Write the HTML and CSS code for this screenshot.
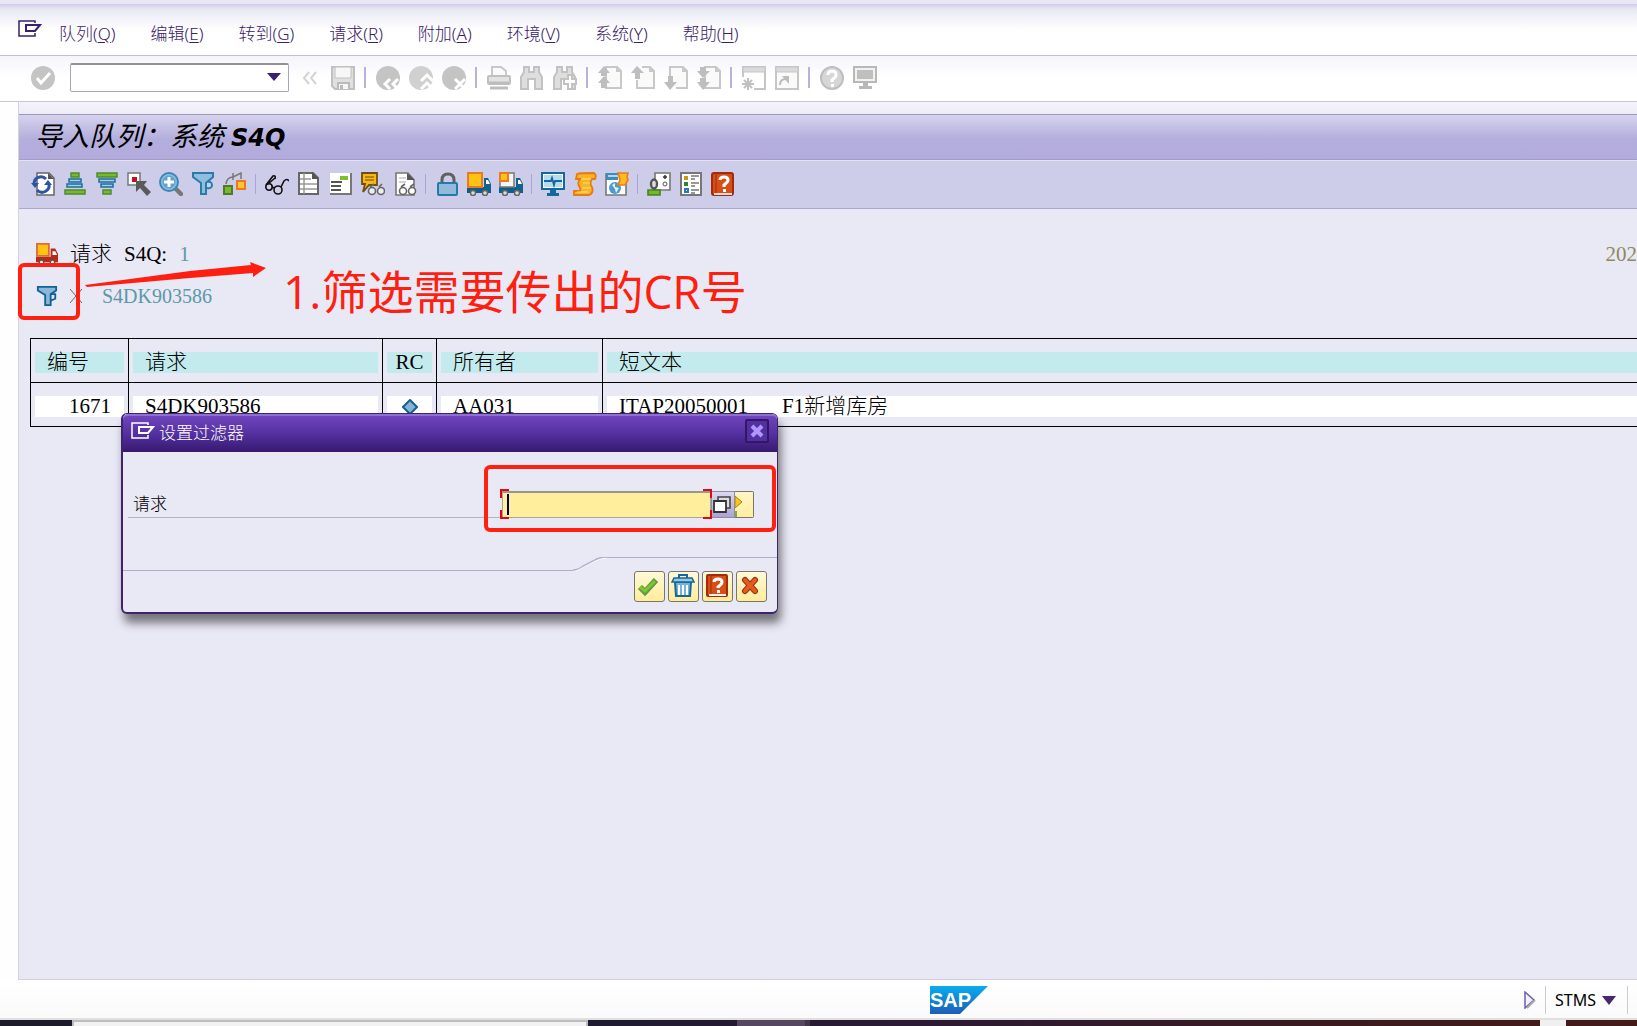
FILE: index.html
```
<!DOCTYPE html>
<html lang="zh-CN">
<head>
    <meta charset="UTF-8">
    <meta name="viewport" content="width=device-width, initial-scale=1.0">
    <title>导入队列：系统 S4Q</title>
    <link rel="stylesheet" href="styles.css">
</head>
<body>
    <!-- Menu bar -->
    <nav class="menubar">
        <button class="menu-icon" aria-label="窗口菜单"><svg width="24" height="18" viewBox="0 0 24 18"><path d="M17 3V1H1v15h16v-3" fill="none" stroke="#38206a" stroke-width="1.5"/><path d="M8 5h14l-5 6H8z" fill="none" stroke="#38206a" stroke-width="2"/></svg></button>
        <div class="menus">
            <button>队列(<u>Q</u>)</button>
            <button>编辑(<u>E</u>)</button>
            <button>转到(<u>G</u>)</button>
            <button>请求(<u>R</u>)</button>
            <button>附加(<u>A</u>)</button>
            <button>环境(<u>V</u>)</button>
            <button>系统(<u>Y</u>)</button>
            <button>帮助(<u>H</u>)</button>
        </div>
    </nav>

    <!-- Standard toolbar -->
    <div class="toolbar">
        <button class="enter" aria-label="回车"><svg viewBox="0 0 24 24"><circle cx="12" cy="12" r="12" fill="#c4c4c4"/><path d="M6 12l4 5 9-10" fill="none" stroke="#fff" stroke-width="3"/></svg></button>
        <div class="command">
            <select aria-label="命令"><option></option></select>
            <svg class="caret" width="14" height="8" viewBox="0 0 14 8"><path d="M0 0h14L7 8z" fill="#3c2070"/></svg>
        </div>
        <button aria-label="收起"><svg viewBox="0 0 24 24"><path d="M11 6l-5 6 5 6M18 6l-5 6 5 6" fill="none" stroke="#d4d4d4" stroke-width="2"/></svg></button>
        <button aria-label="保存"><svg viewBox="0 0 24 24"><path d="M1 1h22v22H4l-3-3z" fill="#e0e0e0" stroke="#c0c0c0" stroke-width="2"/><path d="M4 1h16v11H4z" fill="#f7f7f7" stroke="#c0c0c0"/><path d="M7 23v-6h11v6" fill="#f7f7f7" stroke="#bbb" stroke-width="2"/><path d="M9 19h3v4H9z" fill="#bbb"/></svg></button>
        <span class="sep"></span>
        <button aria-label="返回"><svg viewBox="0 0 24 24"><circle cx="12" cy="12" r="12" fill="#c4c4c4"/><path d="M14 13l-5 5 5 5M22 13l-5 5 5 5" fill="none" stroke="#fff" stroke-width="3"/></svg></button>
        <button aria-label="退出"><svg viewBox="0 0 24 24"><circle cx="12" cy="12" r="12" fill="#d0d0d0"/><path d="M12 15l6-6 6 6M12 23l6-6 6 6" fill="none" stroke="#fff" stroke-width="3"/></svg></button>
        <button aria-label="取消"><svg viewBox="0 0 24 24"><circle cx="12" cy="12" r="12" fill="#c4c4c4"/><path d="M13 13l10 10M23 13L13 23" stroke="#fff" stroke-width="3"/></svg></button>
        <span class="sep"></span>
        <button aria-label="打印"><svg viewBox="0 0 24 24"><path d="M5 10V1h9l5 4v5" fill="#fafafa" stroke="#c8c8c8" stroke-width="2"/><rect x="1" y="10" width="22" height="8" rx="1" fill="#e2e2e2" stroke="#c0c0c0" stroke-width="2"/><path d="M2 17h20M3 22h18" stroke="#bdbdbd" stroke-width="3"/></svg></button>
        <button aria-label="查找"><svg viewBox="0 0 24 24"><path d="M4 1h5v5h5V1h5v5l3 5v12h-7V13h-7v10H1V11l3-5z" fill="#dedede" stroke="#c2c2c2" stroke-width="2"/></svg></button>
        <button aria-label="查找下一个"><svg viewBox="0 0 24 24"><path d="M4 1h5v5h5V1h5v5l3 5v12h-7V13h-7v10H1V11l3-5z" fill="#dedede" stroke="#c2c2c2" stroke-width="2"/><path d="M15 9h4v4h4v5h-4v5h-4v-5h-4v-5h4z" fill="#fff" stroke="#c2c2c2" stroke-width="2"/></svg></button>
        <span class="sep"></span>
        <button aria-label="首页"><svg viewBox="0 0 24 24"><path d="M8 1h11l4 4v17H8z" fill="#fafafa" stroke="#c8c8c8" stroke-width="2"/><path d="M18 1v5h5z" fill="#c8c8c8"/><path d="M6 0l6 7H9v3h-6V7H0zM6 10l6 7H9v5H3v-5H0z" fill="#bebebe"/></svg></button>
        <button aria-label="上一页"><svg viewBox="0 0 24 24"><path d="M6 14v8h17V5l-4-4h-8" fill="#fafafa" stroke="#c8c8c8" stroke-width="2"/><path d="M18 1v5h5z" fill="#c8c8c8"/><path d="M6 0l7 7H9v6H4V7H0z" fill="#bebebe"/></svg></button>
        <button aria-label="下一页"><svg viewBox="0 0 24 24"><path d="M6 10V1h13l4 4v17H12" fill="#fafafa" stroke="#c8c8c8" stroke-width="2"/><path d="M18 1v5h5z" fill="#c8c8c8"/><path d="M4 10h5v6h4l-7 8-6-8h4z" fill="#bebebe"/></svg></button>
        <button aria-label="末页"><svg viewBox="0 0 24 24"><path d="M8 1h11l4 4v17H8z" fill="#fafafa" stroke="#c8c8c8" stroke-width="2"/><path d="M18 1v5h5z" fill="#c8c8c8"/><path d="M3 1h6v4h4l-7 7-6-7h3zM3 12h6v4h4l-7 8-6-8h3z" fill="#bebebe"/></svg></button>
        <span class="sep"></span>
        <button aria-label="新建会话"><svg viewBox="0 0 24 24"><path d="M1 11V1h22v22H12" fill="none" stroke="#c6c6c6" stroke-width="2"/><path d="M1 1h22v5H1z" fill="#dadada" stroke="#c6c6c6"/><path d="M6 12v12M0 18h12M2 14l8 8M10 14l-8 8" stroke="#c0c0c0" stroke-width="2"/></svg></button>
        <button aria-label="快捷方式"><svg viewBox="0 0 24 24"><path d="M1 1h22v22H1z" fill="#fafafa" stroke="#c6c6c6" stroke-width="2"/><path d="M1 1h22v5H1z" fill="#dadada" stroke="#c6c6c6"/><path d="M5 19q0-6 6-6" fill="none" stroke="#bcbcbc" stroke-width="2"/><path d="M7 10h7v8z" fill="#bcbcbc"/></svg></button>
        <span class="sep"></span>
        <button aria-label="帮助"><svg viewBox="0 0 24 24"><circle cx="12" cy="12" r="11" fill="#d6d6d6" stroke="#bebebe" stroke-width="2"/><path d="M8 9q0-4 4-4t4 4q0 2-4 5v2" fill="none" stroke="#fff" stroke-width="3"/><path d="M11 18h3v3h-3z" fill="#fff"/></svg></button>
        <button aria-label="本地布局"><svg viewBox="0 0 24 24"><path d="M1 1h22v15H1z" fill="#f2f2f2" stroke="#b8b8b8" stroke-width="2"/><path d="M4 4h16v9H4z" fill="#bfbfbf"/><path d="M10 16h5v4h4v3H6v-3h4z" fill="#b8b8b8"/></svg></button>
    </div>

    <main class="window">
        <h1 class="title">导入队列：系统 <span class="sid">S4Q</span></h1>

        <!-- Application toolbar -->
        <div class="app-toolbar">
            <button aria-label="刷新"><svg viewBox="0 0 24 24"><path d="M6 1h12l5 5v17H6z" fill="#fff" stroke="#666" stroke-width="1.5"/><path d="M17 1v6h6z" fill="#555"/><path d="M3 12a7 7 0 0 1 12-5M18 12a7 7 0 0 1-12 6" fill="none" stroke="#2c55a5" stroke-width="3"/><path d="M0 11h8l-4 5zM13 13h8l-4-5z" fill="#2c55a5"/></svg></button>
            <button aria-label="升序"><svg viewBox="0 0 24 24"><path d="M8 1h8v4H8zM2 18h20v4H2z" fill="#7cb82a" stroke="#4c8c2c" stroke-width="1.5"/><rect x="6" y="7" width="12" height="3" fill="#a9cde8" stroke="#1b6c9c" stroke-width="1.5"/><rect x="4" y="12" width="15" height="3" fill="#a9cde8" stroke="#1b6c9c" stroke-width="1.5"/></svg></button>
            <button aria-label="降序"><svg viewBox="0 0 24 24"><path d="M2 1h20v4H2zM8 18h8v4H8z" fill="#7cb82a" stroke="#4c8c2c" stroke-width="1.5"/><rect x="4" y="7" width="16" height="3" fill="#a9cde8" stroke="#1b6c9c" stroke-width="1.5"/><rect x="6" y="12" width="12" height="3" fill="#a9cde8" stroke="#1b6c9c" stroke-width="1.5"/></svg></button>
            <button aria-label="选择"><svg viewBox="0 0 24 24"><path d="M1 1h12v12H1z" fill="#fff" stroke="#777" stroke-width="1.5"/><path d="M5 5h5v5H5z" fill="#c8101c"/><path d="M9 9h11l-3 4 7 7-4 4-7-8-4 4z" fill="#5a5a5a"/></svg></button>
            <button aria-label="放大"><svg viewBox="0 0 24 24"><path d="M17 17l5 5" stroke="#777" stroke-width="4.5" stroke-linecap="round"/><circle cx="10" cy="10" r="9" fill="#8fbcdd" stroke="#3c87b4" stroke-width="2"/><circle cx="10" cy="10" r="6.5" fill="#5fa3cb"/><path d="M10 5v10M5 10h10" stroke="#fff" stroke-width="3"/></svg></button>
            <button aria-label="过滤"><svg viewBox="0 0 24 24"><path d="M2 1h20v4l-7 6v11h-5V11L2 5z" fill="#92bedd" stroke="#2a7bab" stroke-width="2"/><path d="M16 10q5-1 5 3t-5 3" fill="#b9d8ed" stroke="#2a7bab" stroke-width="2"/></svg></button>
            <button aria-label="依赖关系"><svg viewBox="0 0 24 24"><path d="M3 12q1-7 7-7M10 1v7M10 5l8-4v6" fill="none" stroke="#777" stroke-width="1.5"/><rect x="1" y="14" width="8" height="8" fill="#7cb82a" stroke="#4c7c2c" stroke-width="2"/><rect x="14" y="9" width="8" height="8" fill="#ffc52a" stroke="#e97929" stroke-width="2"/></svg></button>
            <span class="sep"></span>
            <button aria-label="显示"><svg viewBox="0 0 24 24"><g fill="none" stroke="#111" stroke-width="1.6"><circle cx="4" cy="15" r="3.2"/><circle cx="13" cy="18" r="4"/><path d="M1 13L8 4q3-1 2 3M7 15l3 1M16 15l3-6q3-3 5 0M3 12l7-6"/></g></svg></button>
            <button aria-label="列表"><svg viewBox="0 0 24 24"><path d="M2 1h14l5 5v16H2z" fill="#fff" stroke="#666" stroke-width="2"/><path d="M15 0v7h7z" fill="#555"/><path d="M7 1v21M3 7h11M3 12h17M3 17h17" stroke="#999" stroke-width="1.5"/></svg></button>
            <button aria-label="详细信息"><svg viewBox="0 0 24 24"><path d="M1 1h21v21H1z" fill="#fff"/><path d="M22 1v21H1" fill="none" stroke="#777" stroke-width="2"/><path d="M11 4h8v4h-8z" fill="#7cc02c"/><path d="M2 10h11M2 14h10M2 18h10" stroke="#555" stroke-width="2"/></svg></button>
            <button aria-label="显示日志"><svg viewBox="0 0 24 24"><path d="M1 1h15v12h-8l-6 7 2-8H1z" fill="#f9b717" stroke="#6d5010" stroke-width="1.8"/><path d="M4 5h9M4 8h9" stroke="#6d5010"/><circle cx="11" cy="19" r="3.5" fill="#eee" stroke="#666" stroke-width="1.6"/><circle cx="20" cy="19" r="3.5" fill="#eee" stroke="#666" stroke-width="1.6"/><path d="M9 15l4-3M18 15l3-3" stroke="#666" stroke-width="1.6"/></svg></button>
            <button aria-label="显示文档"><svg viewBox="0 0 24 24"><path d="M3 23V1h12l6 7v15z" fill="#fff" stroke="#777" stroke-width="1.6"/><path d="M14 1v7h8z" fill="#555"/><path d="M6 6h7M6 10h7" stroke="#aaa"/><circle cx="10" cy="19" r="3.5" fill="#fff" stroke="#666" stroke-width="1.6"/><circle cx="19" cy="19" r="3.5" fill="#fff" stroke="#666" stroke-width="1.6"/><path d="M8 15l4-3M17 15l4-3" stroke="#666" stroke-width="1.6"/></svg></button>
            <span class="sep"></span>
            <button aria-label="锁定"><svg viewBox="0 0 24 24"><path d="M7 11V8q0-6 6-6t6 6v3" fill="none" stroke="#606060" stroke-width="3"/><rect x="3" y="11" width="19" height="12" rx="1" fill="#94badb" stroke="#247aaa" stroke-width="2"/></svg></button>
            <button aria-label="导入全部"><svg viewBox="0 0 24 24"><path d="M0 15h24v6H0z" fill="#0d5e8c"/><path d="M1 1h14v14H1z" fill="#ffc413" stroke="#eb7a20" stroke-width="2"/><path d="M17 6h4l3 6v7h-7z" fill="#12618f"/><path d="M19 8h2l2 4h-4z" fill="#fff"/><circle cx="6" cy="21" r="2.5" fill="#ddd" stroke="#666" stroke-width="1.5"/><circle cx="18" cy="21" r="2.5" fill="#ddd" stroke="#666" stroke-width="1.5"/></svg></button>
            <button aria-label="导入请求"><svg viewBox="0 0 24 24"><path d="M0 15h24v6H0z" fill="#0d5e8c"/><path d="M1 1h14v14H1z" fill="#f5f5f5" stroke="#777" stroke-width="1.5"/><path d="M1 1h8v8H1z" fill="#ffc413" stroke="#eb7a20" stroke-width="2"/><path d="M17 6h4l3 6v7h-7z" fill="#12618f"/><path d="M19 8h2l2 4h-4z" fill="#fff"/><circle cx="6" cy="21" r="2.5" fill="#ddd" stroke="#666" stroke-width="1.5"/><circle cx="18" cy="21" r="2.5" fill="#ddd" stroke="#666" stroke-width="1.5"/></svg></button>
            <span class="sep"></span>
            <button aria-label="监控"><svg viewBox="0 0 24 24"><path d="M1 1h22v16H1z" fill="#fff" stroke="#12699b" stroke-width="2"/><path d="M3 3h18v12H3z" fill="#b7dcf0"/><path d="M3 9h7l1-3 2 7 1-4h7" fill="none" stroke="#12699b" stroke-width="1.8"/><path d="M9 17h6v4h3v3H6v-3h3z" fill="#12699b"/></svg></button>
            <button aria-label="日志"><svg viewBox="0 0 24 24"><path d="M4 2q2-1 17-1 3 2 1 6h-3q-3 4 0 8 2 6-3 8H1v-4h6q1-2-1-5-2-4 1-7H3z" fill="#f9b522" stroke="#e77917" stroke-width="1.8"/><path d="M8 7h10M10 11h7M9 16h9M4 20h11" stroke="#fde28a"/></svg></button>
            <button aria-label="历史"><svg viewBox="0 0 24 24"><path d="M1 2h20v21H1z" fill="#fff" stroke="#777" stroke-width="1.6"/><path d="M1 1h12v7H1z" fill="#3f8bbb"/><path d="M3 4h10" stroke="#b5d7eb" stroke-width="2"/><circle cx="10" cy="16" r="6" fill="#4b9acb"/><path d="M7 13l3-2v4l4 1-3 5-1-4z" fill="#e5f3fb"/><path d="M13 1h10l-1 4 1 3-3 5h-7l2-5z" fill="#ffbd1d" stroke="#ec7b1b" stroke-width="1.6"/></svg></button>
            <span class="sep"></span>
            <button aria-label="用户"><svg viewBox="0 0 24 24"><path d="M8 1h15v17H8z" fill="#fff" stroke="#777" stroke-width="1.6"/><path d="M16 5h4M18 3v4" stroke="#333" stroke-width="1.5"/><circle cx="18" cy="12" r="2" fill="none" stroke="#555"/><path d="M1 23v-5h12v5z" fill="#77b82a" stroke="#42851f" stroke-width="1.6"/><ellipse cx="7" cy="12" rx="3" ry="4.5" fill="#ddd" stroke="#555" stroke-width="2.4"/></svg></button>
            <button aria-label="图例"><svg viewBox="0 0 24 24"><path d="M2 1h20v22H2z" fill="#fff" stroke="#777" stroke-width="2"/><path d="M5 4h4v4H5z" fill="#c69816"/><path d="M5 10h4v4H5z" fill="#318231"/><path d="M6 17h3v3H6z" fill="none" stroke="#247eb0" stroke-width="2"/><path d="M12 4h8M12 7h4M12 11h8M12 14h4M12 18h8M12 21h4" stroke="#777" stroke-width="1.4"/></svg></button>
            <button aria-label="应用帮助"><svg viewBox="0 0 24 24"><rect x="1" y="1" width="21" height="22" rx="2" fill="#d64f16" stroke="#a52a0b" stroke-width="2"/><path d="M5 1v20" stroke="#a52a0b"/><path d="M3 22h18" stroke="#ddd" stroke-width="2"/><path d="M9 8q0-3 4-3t4 3q0 2-4 5v2" fill="none" stroke="#fff" stroke-width="3"/><path d="M12 17h3v3h-3z" fill="#fff"/></svg></button>
        </div>

        <section class="list">
            <div class="info">
                <svg width="22" height="22" viewBox="0 0 24 24"><path d="M0 15h24v6H0z" fill="#b62b18"/><path d="M1 1h13v13H1z" fill="#ffc413" stroke="#e06a3b" stroke-width="2"/><path d="M16 6h5l3 6v7h-8z" fill="#b62b18"/><path d="M18 9h3l2 4h-5z" fill="#fff"/><circle cx="6" cy="21" r="2.5" fill="#eee" stroke="#555" stroke-width="1.5"/><circle cx="18" cy="21" r="2.5" fill="#eee" stroke="#555" stroke-width="1.5"/></svg>
                <span>请求</span>
                <span>S4Q:</span>
                <span class="teal">1</span>
                <span class="date">202</span>
            </div>
            <div class="info">
                <svg width="22" height="22" viewBox="0 0 24 24"><path d="M2 2h20v4l-6 4v12h-6V11L2 6z" fill="#8db5d9" stroke="#0f6294" stroke-width="2"/><path d="M16 10h5v5l-5 2" fill="none" stroke="#0f6294" stroke-width="2"/></svg>
                <svg width="16" height="16" viewBox="0 0 16 16"><path d="M0 1l12 14M12 1L0 15" stroke="#666"/></svg>
                <span class="teal filter">S4DK903586</span>
            </div>

            <table class="queue">
                <thead>
                    <tr>
                        <th class="no"><span>编号</span></th>
                        <th class="req"><span>请求</span></th>
                        <th class="rc"><span>RC</span></th>
                        <th class="owner"><span>所有者</span></th>
                        <th><span>短文本</span></th>
                    </tr>
                </thead>
                <tbody>
                    <tr>
                        <td class="no"><span>1671</span></td>
                        <td><span>S4DK903586</span></td>
                        <td class="rc"><span><svg width="16" height="16" viewBox="0 0 16 16"><path d="M8 1l3 3 4 4-4 4-3 3-3-3-4-4 4-4z" fill="#85b3d8" stroke="#155f8d" stroke-width="2"/></svg></span></td>
                        <td><span>AA031</span></td>
                        <td><span>ITAP20050001<b class="desc">F1新增库房</b></span></td>
                    </tr>
                </tbody>
            </table>
        </section>
    </main>

    <footer class="status">
        <svg class="sap" width="58" height="28" viewBox="0 0 58 28">
            <defs><linearGradient id="sapBlue" x1="0" y1="0" x2="0" y2="1"><stop offset="0" stop-color="#08adee"/><stop offset="1" stop-color="#1d5cb9"/></linearGradient></defs>
            <path d="M0 0h58L30 28H0z" fill="url(#sapBlue)"/>
            <text class="sap-text" x="0" y="21">SAP</text>
        </svg>
        <div class="session">
            <svg width="12" height="18" viewBox="0 0 12 18"><path d="M1 1l9 8-9 8z" fill="#f3f1fc" stroke="#6c5cb4" stroke-width="1.5"/><path d="M3 17l8-8" stroke="#aaa" stroke-width="2"/></svg>
            <label class="system">
                <select aria-label="系统信息"><option>STMS</option></select>
                <svg width="14" height="9" viewBox="0 0 14 9"><path d="M0 0h14L7 9z" fill="#45286f"/></svg>
            </label>
        </div>
    </footer>
    <div class="taskbar">
        <span class="search"></span>
        <span class="task"></span>
        <span class="tray"></span>
    </div>

    <!-- Filter dialog -->
    <div class="dialog" role="dialog" aria-labelledby="dialogTitle">
        <div class="dialog-title">
            <svg width="24" height="18" viewBox="0 0 24 18"><path d="M17 3V1H1v15h16v-3" fill="none" stroke="#fff" stroke-width="1.5"/><path d="M8 5h14l-5 6H8z" fill="none" stroke="#fff" stroke-width="2"/></svg>
            <span id="dialogTitle">设置过滤器</span>
            <button class="close" aria-label="关闭"><svg width="14" height="14" viewBox="0 0 14 14"><path d="M2 2l10 10M12 2L2 12" stroke="#b296ff" stroke-width="4"/></svg></button>
        </div>
        <div class="field-row">
            <label for="request">请求</label>
            <div class="field">
                <input type="text" id="request">
                <svg class="focus" viewBox="0 0 212 30" width="212" height="30"><path d="M1 9V1h8M203 1h8v8M1 21v8h8M203 29h8v-8" fill="none" stroke="#e30613" stroke-width="2"/></svg>
            </div>
            <button class="f4" aria-label="值帮助"><svg width="18" height="18" viewBox="0 0 18 18"><path d="M5 1h12v11H5z" fill="#ddd" stroke="#444" stroke-width="1.6"/><path d="M1 5h12v11H1z" fill="#fff" stroke="#333" stroke-width="1.8"/></svg></button>
            <button class="multi" aria-label="多项选择"><svg width="8" height="24" viewBox="0 0 8 24"><path d="M0 3l7 6-7 6z" fill="#ffc514" stroke="#a8811c"/><path d="M1 18v6" stroke="#7bae3a" stroke-width="2"/></svg></button>
        </div>
        <div class="divider">
            <span class="low"></span>
            <svg width="34" height="14" viewBox="0 0 34 14"><path d="M0 14q5 0 10-4l10-5q6-4 14-4" fill="none" stroke="#fff"/><path d="M0 13q5 0 10-4l10-5q6-4 14-4" fill="none" stroke="#b1aecb" stroke-width="1.4"/></svg>
            <span class="high"></span>
        </div>
        <div class="actions">
            <button aria-label="确认"><svg viewBox="0 0 24 24"><path d="M3 13l5 5L19 6" fill="none" stroke="#5d9a48" stroke-width="6"/><path d="M3 13l5 4L18 7" fill="none" stroke="#7fc62e" stroke-width="3"/></svg></button>
            <button aria-label="删除"><svg viewBox="0 0 24 24"><path d="M8 4V1h8v3" fill="none" stroke="#14689a" stroke-width="2"/><path d="M4 8h16l-1 14H5z" fill="#79b1d8" stroke="#14689a" stroke-width="2"/><path d="M8 11v10M12 11v10M16 11v10" stroke="#fff" stroke-width="2"/><path d="M1 8l2-4h18l2 4z" fill="#9ac6e3" stroke="#14689a" stroke-width="1.6"/></svg></button>
            <button aria-label="帮助"><svg viewBox="0 0 24 24"><rect x="2" y="1" width="20" height="21" rx="1" fill="#d64f16" stroke="#a52a0b" stroke-width="2"/><path d="M6 1v20" stroke="#a52a0b"/><path d="M4 21h17" stroke="#eee" stroke-width="2"/><path d="M9 8q0-3 4-3t4 3q0 2-4 5v1" fill="none" stroke="#fff" stroke-width="3"/><path d="M12 16h3v3h-3z" fill="#fff"/></svg></button>
            <button aria-label="取消"><svg viewBox="0 0 24 24"><path d="M6 6l10 11M16 6L6 17" stroke="#9c2e12" stroke-width="6" stroke-linecap="round"/><path d="M6 6l10 11M16 6L6 17" stroke="#e25c1c" stroke-width="4" stroke-linecap="round"/></svg></button>
        </div>
    </div>

    <!-- Notes drawn over the screen -->
    <span class="mark mark-filter"></span>
    <span class="mark mark-field"></span>
    <svg class="arrow" width="182" height="26" viewBox="0 0 182 26"><path d="M0 23L105 9l61-6-1-3 16 6-13 9v-4l-63 5L2 25z" fill="#ff1f10"/></svg>
    <p class="note">1.筛选需要传出的CR号</p>
</body>
</html>
```
FILE: styles.css
```
/* Basic styling */
* {
    box-sizing: border-box;
}

body {
    position: relative;
    display: flex;
    flex-direction: column;
    height: 100vh;
    margin: 0;
    overflow: hidden;
    background: #fefefe;
    color: #000;
    font-family: "Noto Sans", "Noto Sans CJK SC", sans-serif;
    font-size: 17px;
}

button {
    padding: 0;
    border: none;
    background: none;
    color: inherit;
    font: inherit;
    cursor: pointer;
}

svg {
    display: block;
    flex: none;
}

select {
    appearance: none;
    border: none;
    background: none;
    font: inherit;
}

/* Menu bar */
.menubar {
    display: flex;
    align-items: center;
    height: 56px;
    padding: 6px 18px 0;
    border-top: 4px solid #e9e6f5;
    border-bottom: 1px solid #c2bfcd;
    background: linear-gradient(#d0cce8, #e8e8f4 5px, #fff 26px);
    color: #38206a;
}

.menu-icon {
    margin-bottom: 8px;
}

.menus {
    display: flex;
    gap: 35px;
    margin-left: 17px;
    font-weight: 300;
}

.menus u {
    text-underline-offset: 2px;
}

/* Toolbars */
.toolbar {
    display: flex;
    align-items: center;
    gap: 9px;
    height: 46px;
    padding: 0 31px 2px;
    border-bottom: 1px solid #c9c7d4;
    background: linear-gradient(#f5f4fb, #fff 22px);
}

.toolbar svg,
.app-toolbar svg {
    width: 24px;
    height: 24px;
}

.toolbar .sep {
    width: 3px;
    height: 21px;
    border-left: 2px solid #b8b0df;
}

.enter {
    margin-right: 6px;
}

.command {
    position: relative;
}

.command select {
    display: block;
    width: 219px;
    height: 29px;
    border: 1px solid #a9a7b3;
    border-top: 2px solid #929099;
    border-radius: 2px;
    background: #fff;
}

.toolbar .caret {
    position: absolute;
    top: 10px;
    right: 8px;
    width: 14px;
    height: 8px;
}

/* Main window */
.window {
    flex: 1;
    min-height: 0;
    margin-left: 18px;
    padding-top: 12px;
    overflow: hidden;
    border-left: 1px solid #d5d1e3;
    border-bottom: 1px solid #d0cde0;
    background: linear-gradient(#f5f3fb, #eeebf7 12px, #e9e8f5 12px);
}

.title {
    height: 46px;
    margin: 0;
    padding-left: 16px;
    border-top: 1px solid #9c98bd;
    border-bottom: 1px solid #a39dca;
    background: linear-gradient(#d6d3ed, #b4aedd 24px, #b2abdc);
    font-size: 27px;
    font-style: italic;
    font-weight: 400;
    line-height: 42px;
}

.title .sid {
    font-family: "DejaVu Sans", sans-serif;
    font-size: 24px;
    font-weight: bold;
}

.app-toolbar {
    display: flex;
    align-items: center;
    gap: 8px;
    height: 49px;
    padding: 0 0 2px 12px;
    border-top: 1px solid #e4e2f2;
    border-bottom: 1px solid #aca7cf;
    background: #cecde9;
}

.app-toolbar .sep {
    width: 2px;
    height: 20px;
    border-left: 1px solid #a9a3d8;
}

/* List output */
.list {
    padding: 24px 0 0 11px;
    font-family: "Liberation Serif", "Noto Sans CJK SC", serif;
    font-size: 21px;
    font-weight: 300;
}

.info {
    display: flex;
    align-items: center;
    gap: 12px;
    height: 42px;
    padding-left: 6px;
    line-height: 42px;
}

.info .teal {
    color: #5c98a8;
}

.info .filter {
    margin-left: 4px;
    font-size: 20px;
}

.date {
    margin-left: auto;
    color: #8f8a58;
}

/* The last column runs on past the window edge */
.queue {
    width: calc(100% + 8px);
    margin-top: 21px;
    border-collapse: collapse;
    table-layout: fixed;
}

.queue th,
.queue td {
    height: 44px;
    padding: 13px 4px 9px;
    border: 1px solid #000;
    font-weight: 300;
    text-align: left;
}

.queue span {
    display: block;
    height: 21px;
    padding-left: 12px;
    background: #fff;
    line-height: 21px;
    white-space: nowrap;
}

.queue th span {
    background: #c3eaec;
}

.queue .no {
    width: 98px;
}

.queue td.no span {
    padding: 0 13px 0 0;
    text-align: right;
}

.queue .req {
    width: 254px;
}

.queue .rc {
    width: 54px;
}

.queue .rc span {
    display: flex;
    align-items: center;
    justify-content: center;
    padding: 0;
}

.queue .owner {
    width: 166px;
}

.desc {
    margin-left: 34px;
    font-weight: 300;
}

/* Status bar */
.status {
    display: flex;
    align-items: center;
    justify-content: flex-end;
    height: 40px;
    padding: 2px 9px 0 0;
    border-bottom: 2px solid #e0e0e0;
    background: linear-gradient(#fff, #fafafa);
}

.sap {
    margin-right: auto;
    margin-left: 930px;
}

.sap-text {
    fill: #fff;
    font-family: "Liberation Sans", sans-serif;
    font-size: 20px;
    font-weight: bold;
}

.session {
    display: flex;
    align-items: center;
    gap: 9px;
}

.system {
    display: flex;
    align-items: center;
    height: 28px;
    gap: 6px;
    padding: 0 11px 0 9px;
    border-right: 1px solid #ccc;
    border-left: 1px solid #ccc;
}

.system select {
    padding: 0;
    font-size: 16px;
}

.taskbar {
    display: flex;
    height: 6px;
    background: linear-gradient(90deg, #1c1b2a, #1e1a30 36%, #2a1a34 55%, #3c1a1c 85%, #431c1a);
}

.taskbar .search {
    width: 516px;
    margin-left: 72px;
    border: 2px solid #bdbdbd;
    border-bottom: none;
    background: #f2f2f2;
}

.taskbar .task {
    width: 73px;
    margin-left: 149px;
    border-right: 5px solid #423548;
    background: #54475f;
}

.taskbar .tray {
    width: 26px;
    margin: 0 71px 0 auto;
    background: #f0f0f0;
}

/* Filter dialog */
.dialog {
    position: absolute;
    top: 413px;
    left: 121px;
    width: 657px;
    border: 2px solid #40236f;
    border-width: 1px 1px 2px 2px;
    border-radius: 6px;
    background: #e9e9f5;
    box-shadow: 3px 9px 10px rgba(0, 0, 0, 0.5);
}

.dialog-title {
    display: flex;
    align-items: center;
    gap: 4px;
    height: 38px;
    padding: 0 8px 6px;
    border-top: 2px solid #8d70d0;
    border-radius: 5px 5px 0 0;
    background: linear-gradient(#7044bc, #5430a0 50%, #36196d);
    color: #fff;
    font-weight: 300;
}

.close {
    display: flex;
    align-items: center;
    justify-content: center;
    width: 24px;
    height: 24px;
    margin-left: auto;
    border: 2px solid #351568;
    border-radius: 2px;
    background: #5130a0;
}

.field-row {
    display: flex;
    align-items: center;
    height: 105px;
    padding: 0 23px 0 5px;
}

.field-row label {
    flex: 1;
    height: 27px;
    padding-left: 5px;
    border-bottom: 1px solid #b5b2c7;
    font-weight: 300;
    line-height: 25px;
}

.field {
    position: relative;
    width: 209px;
}

.field input {
    display: block;
    width: 100%;
    height: 27px;
    border: 1px solid #a9a69c;
    border-top: 2px solid #98968e;
    outline: none;
    background: linear-gradient(#00005a, #00005a) 4px 1px / 2px 21px no-repeat, #ffee9c;
    font-size: 17px;
}

.focus {
    position: absolute;
    top: -2px;
    left: -2px;
}

.f4,
.multi {
    height: 27px;
    border: 1px solid #8e8ca0;
}

.f4 {
    width: 24px;
    padding-left: 1px;
    background: linear-gradient(#dcd8f0, #aaa3d4);
}

.multi {
    width: 19px;
    border-color: #77756c;
    border-left: none;
    border-radius: 0 2px 2px 0;
    background: linear-gradient(#fff5c4, #ffeea0);
}

.divider {
    display: flex;
    height: 14px;
}

.low {
    flex: 1;
    border-bottom: 1px solid #b1aecb;
}

.high {
    width: 170px;
    border-top: 1px solid #b1aecb;
}

.actions {
    display: flex;
    justify-content: flex-end;
    gap: 3px;
    padding: 0 10px 10px;
}

.actions button {
    display: flex;
    align-items: center;
    justify-content: center;
    width: 31px;
    height: 31px;
    padding: 0 2px 2px 0;
    border: 1px solid #77756c;
    border-radius: 3px;
    background: linear-gradient(#fff9d8, #ffec9a);
}

.actions svg {
    width: 24px;
    height: 24px;
}

/* Red notes */
.mark {
    position: absolute;
    border: 4px solid #ff2010;
    border-radius: 6px;
}

.mark-filter {
    top: 263px;
    left: 18px;
    width: 62px;
    height: 57px;
}

.mark-field {
    top: 465px;
    left: 484px;
    width: 292px;
    height: 67px;
}

.arrow {
    position: absolute;
    top: 262px;
    left: 85px;
}

.note {
    position: absolute;
    top: 259px;
    left: 283px;
    margin: 0;
    color: #ff1f10;
    font-family: "Open Sans", "Noto Sans CJK SC", sans-serif;
    font-size: 46px;
    line-height: 64px;
    white-space: nowrap;
}
```
